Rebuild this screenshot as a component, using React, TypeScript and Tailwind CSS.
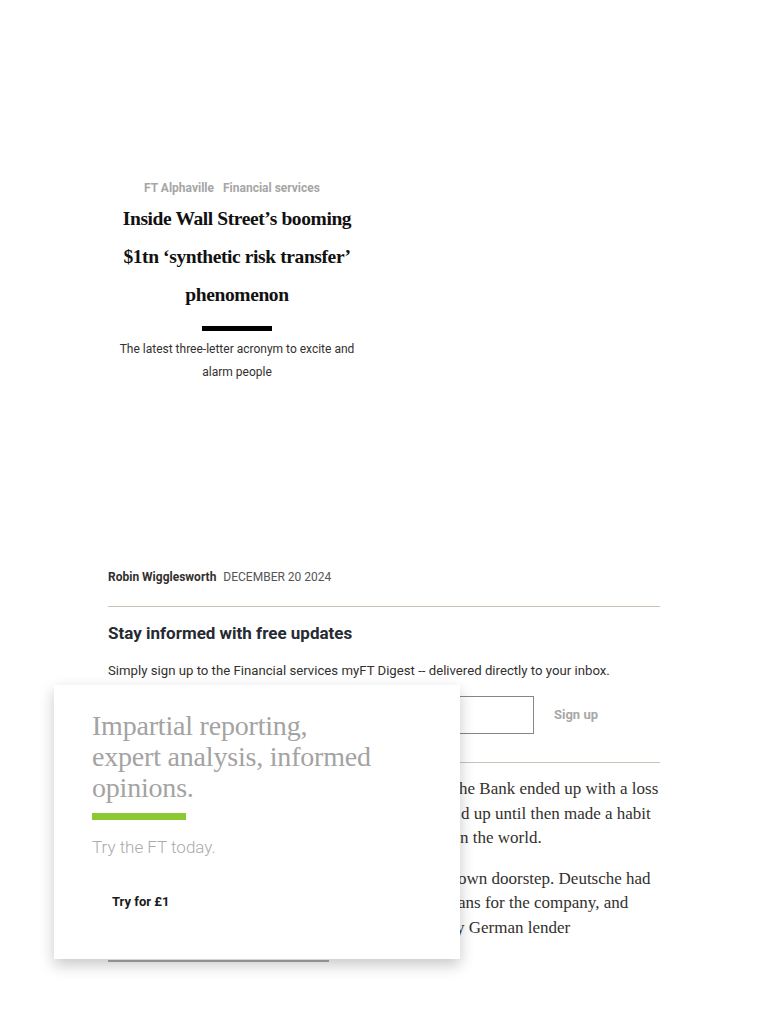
import React from "react";

const sans = "font-['Roboto','Liberation_Sans',sans-serif]";
const serif = "font-['Liberation_Serif','DejaVu_Serif',serif]";

// the start of each line lies under the paywall; only the visible tail is drawn
const para1: [string, string][] = [
  ["he Bank ended up with a loss", "pl-[351px]"],
  ["d up until then made a habit", "pl-[353px]"],
  ["n the world.", "pl-[352px]"],
];

const para2: [string, string][] = [
  ["own doorstep. Deutsche had", "pl-[350px]"],
  ["ans for the company, and", "pl-[350px]"],
  ["y German lender", "pl-[348px]"],
];

const Paywall = () => {
  return (
    <div className="absolute left-[54px] top-[685px] w-[406px] h-[274px] bg-white shadow-[0_6px_14px_rgba(0,0,0,0.22)] pl-[38px] pt-[25px]">
      <h2 className={`${serif} text-[28px] leading-[31px] text-[#a3a3a3] tracking-[-0.2px]`}>
        Impartial reporting,
        <br />
        expert analysis, informed
        <br />
        opinions.
      </h2>
      <div className="mt-[10px] w-[94px] h-[7px] bg-[#8cc832]" />
      <p className={`${sans} mt-[15px] text-[17px] font-light text-[#aaaaaa]`}>
        Try the FT today.
      </p>
      <button className={`${sans} mt-[31px] ml-[20px] text-[13px] font-bold text-[#1a1a1a]`}>
        Try for £1
      </button>
    </div>
  );
};

const App = () => {
  return (
    <div className="relative min-h-[1024px] bg-white overflow-hidden">
      <div className="w-[552px] mx-auto pt-[179px]">
        {/* teaser card */}
        <div className="w-[258px] text-center">
          <div className={`${sans} pr-[10px] text-[12px] font-bold text-[#a6a6a6] leading-[18px]`}>
            <span>FT Alphaville</span>
            <span className="ml-[9px]">Financial services</span>
          </div>
          <h1 className={`${serif} mt-[3px] text-[19.5px] font-bold leading-[38px] text-[#111] tracking-[-0.4px]`}>
            Inside Wall Street’s booming
            <br />
            $1tn ‘synthetic risk transfer’
            <br />
            phenomenon
          </h1>
          <div className="mx-auto mt-[12px] w-[70px] h-[5px] bg-black" />
          <p className={`${sans} mt-[7px] text-[12px] leading-[23px] text-[#33302e]`}>
            The latest three-letter acronym to excite and
            <br />
            alarm people
          </p>
        </div>

        {/* byline */}
        <div className={`${sans} mt-[184px] text-[12px] leading-[18px] text-[#33302e]`}>
          <span className="font-bold">Robin Wigglesworth</span>
          <span className="ml-[7px] text-[#555]">DECEMBER 20 2024</span>
        </div>

        <div className="mt-[20px] border-t border-[#ccc1b7]" />

        {/* myFT digest */}
        <div className={sans}>
          <h3 className="mt-[15px] text-[17px] font-bold text-[#262a33] leading-[22px]">
            Stay informed with free updates
          </h3>
          <p className="mt-[18px] text-[13.2px] leading-[18px] text-[#33302e]">
            Simply sign up to the Financial services myFT Digest -- delivered directly to your inbox.
          </p>
          <div className="mt-[16px] flex items-center">
            <input
              type="email"
              className="w-[426px] h-[38px] border border-[#8a8580] bg-white"
            />
            <button className="ml-[20px] text-[13px] font-bold text-[#a8a8a8]">Sign up</button>
          </div>
        </div>

        <div className="mt-[28px] border-t border-[#ccc1b7]" />

        {/* article body */}
        <div className={`${serif} text-[17px] text-[#33302e]`}>
          <p className="mt-[14px] leading-[24.5px]">
            {para1.map((l) => (
              <span key={l[0]} className={`block whitespace-nowrap ${l[1]}`}>
                {l[0]}
              </span>
            ))}
          </p>
          <p className="mt-[16px] leading-[24.5px]">
            {para2.map((l) => (
              <span key={l[0]} className={`block whitespace-nowrap ${l[1]}`}>
                {l[0]}
              </span>
            ))}
          </p>
        </div>

        <div className="mt-[20px] w-[221px] border-t-2 border-[#a9aea8]" />
      </div>

      <Paywall />
    </div>
  );
};

export default App;
